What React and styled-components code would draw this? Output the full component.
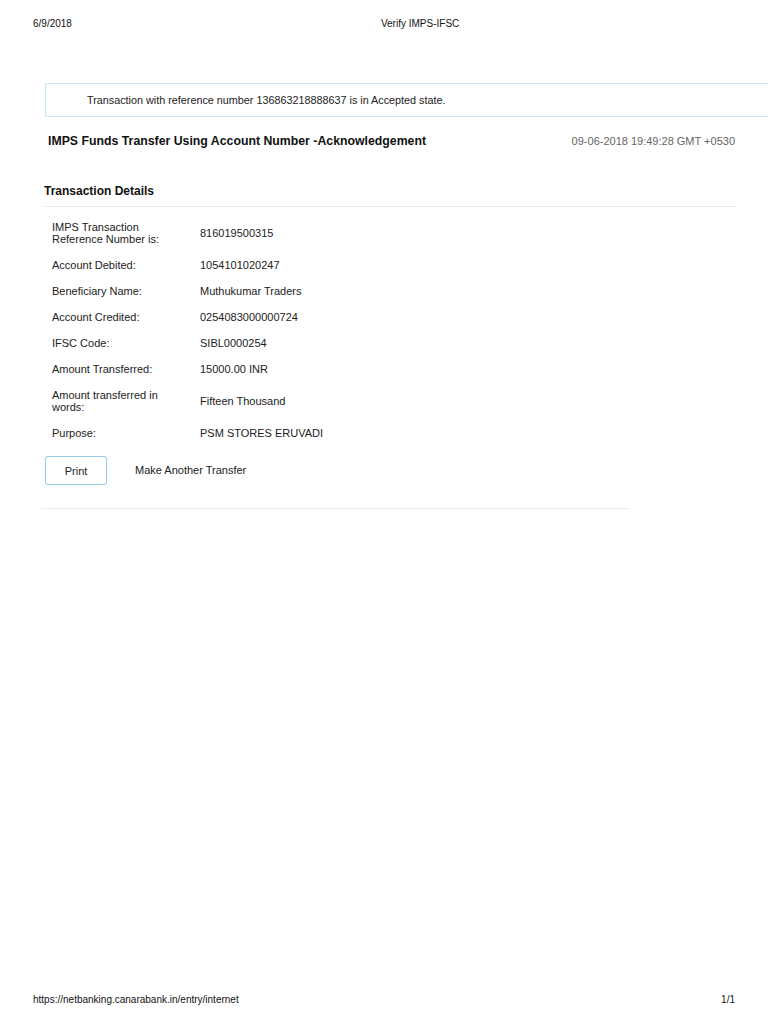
import React from "react";
import styled, { createGlobalStyle } from "styled-components";

const Global = createGlobalStyle`
  html, body { margin: 0; padding: 0; background: #fff; }
  body { font-family: "Liberation Sans", Arial, sans-serif; color: #111; }
`;

const Page = styled.div`
  width: 768px;
  height: 1024px;
  display: flex;
  flex-direction: column;
  box-sizing: border-box;
`;

const PrintHeader = styled.div`
  display: flex;
  align-items: center;
  padding: 18px 33px 0 33px;
  font-size: 10px;
  color: #111;
`;

const HeaderTitle = styled.span`
  margin-left: 309px;
`;

const Content = styled.div`
  flex: 1;
  padding: 54px 0 0 45px;
`;

const Alert = styled.div`
  border: 1px solid #c9e6f1;
  border-right: none;
  height: 32px;
  display: flex;
  align-items: center;
  padding-left: 41px;
  font-size: 10.8px;
  color: #222;
`;

const TitleRow = styled.div`
  display: flex;
  justify-content: space-between;
  align-items: center;
  padding: 17px 33px 0 3px;
`;

const Title = styled.h1`
  margin: 0;
  font-size: 12.3px;
  font-weight: bold;
  color: #111;
`;

const Stamp = styled.span`
  font-size: 11px;
  color: #666;
`;

const SectionTitle = styled.h2`
  margin: 36px 0 0 -1px;
  font-size: 12px;
  font-weight: bold;
  color: #111;
  padding-bottom: 8px;
  border-bottom: 1px solid #ececec;
  width: 692px;
`;

const Details = styled.div`
  display: flex;
  flex-direction: column;
  padding: 7px 0 0 7px;
`;

const Row = styled.div`
  display: grid;
  grid-template-columns: 148px 1fr;
  align-items: center;
  min-height: ${(p) => (p.$tall ? "38px" : "26px")};
  font-size: 11px;
  color: #222;
`;

const Label = styled.span`
  line-height: 12px;
  max-width: ${(p) => (p.$tall ? "120px" : "none")};
`;

const Value = styled.span`
  line-height: 12px;
`;

const Actions = styled.div`
  display: flex;
  align-items: center;
  gap: 28px;
  margin-top: 10px;
`;

const PrintButton = styled.button`
  width: 62px;
  height: 29px;
  border: 1px solid #98cde8;
  border-radius: 3px;
  background: #fff;
  font-family: "Liberation Sans", Arial, sans-serif;
  font-size: 11px;
  color: #222;
  padding: 0;
  box-shadow: 0 0 1px #cde6f3;
`;

const LinkText = styled.span`
  font-size: 11px;
  color: #222;
  margin-top: -2px;
`;

const BottomRule = styled.hr`
  margin: 23px 0 0 -4px;
  width: 589px;
  border: none;
  border-top: 1px solid #ececec;
`;

const Footer = styled.div`
  display: flex;
  justify-content: space-between;
  padding: 0 33px 19px 33px;
  font-size: 10px;
  color: #111;
`;

const rows = [
  ["IMPS Transaction Reference Number is:", "816019500315", true],
  ["Account Debited:", "1054101020247"],
  ["Beneficiary Name:", "Muthukumar Traders"],
  ["Account Credited:", "0254083000000724"],
  ["IFSC Code:", "SIBL0000254"],
  ["Amount Transferred:", "15000.00 INR"],
  ["Amount transferred in words:", "Fifteen Thousand", true],
  ["Purpose:", "PSM STORES ERUVADI"],
];

export default function App() {
  return (
    <Page>
      <Global />
      <PrintHeader>
        <span>6/9/2018</span>
        <HeaderTitle>Verify IMPS-IFSC</HeaderTitle>
      </PrintHeader>
      <Content>
        <Alert>Transaction with reference number 136863218888637 is in Accepted state.</Alert>
        <TitleRow>
          <Title>IMPS Funds Transfer Using Account Number -Acknowledgement</Title>
          <Stamp>09-06-2018 19:49:28 GMT +0530</Stamp>
        </TitleRow>
        <SectionTitle>Transaction Details</SectionTitle>
        <Details>
          {rows.map(([l, v, tall]) => (
            <Row key={l} $tall={tall}>
              <Label $tall={tall}>{l}</Label>
              <Value>{v}</Value>
            </Row>
          ))}
        </Details>
        <Actions>
          <PrintButton>Print</PrintButton>
          <LinkText>Make Another Transfer</LinkText>
        </Actions>
        <BottomRule />
      </Content>
      <Footer>
        <span>https://netbanking.canarabank.in/entry/internet</span>
        <span>1/1</span>
      </Footer>
    </Page>
  );
}
